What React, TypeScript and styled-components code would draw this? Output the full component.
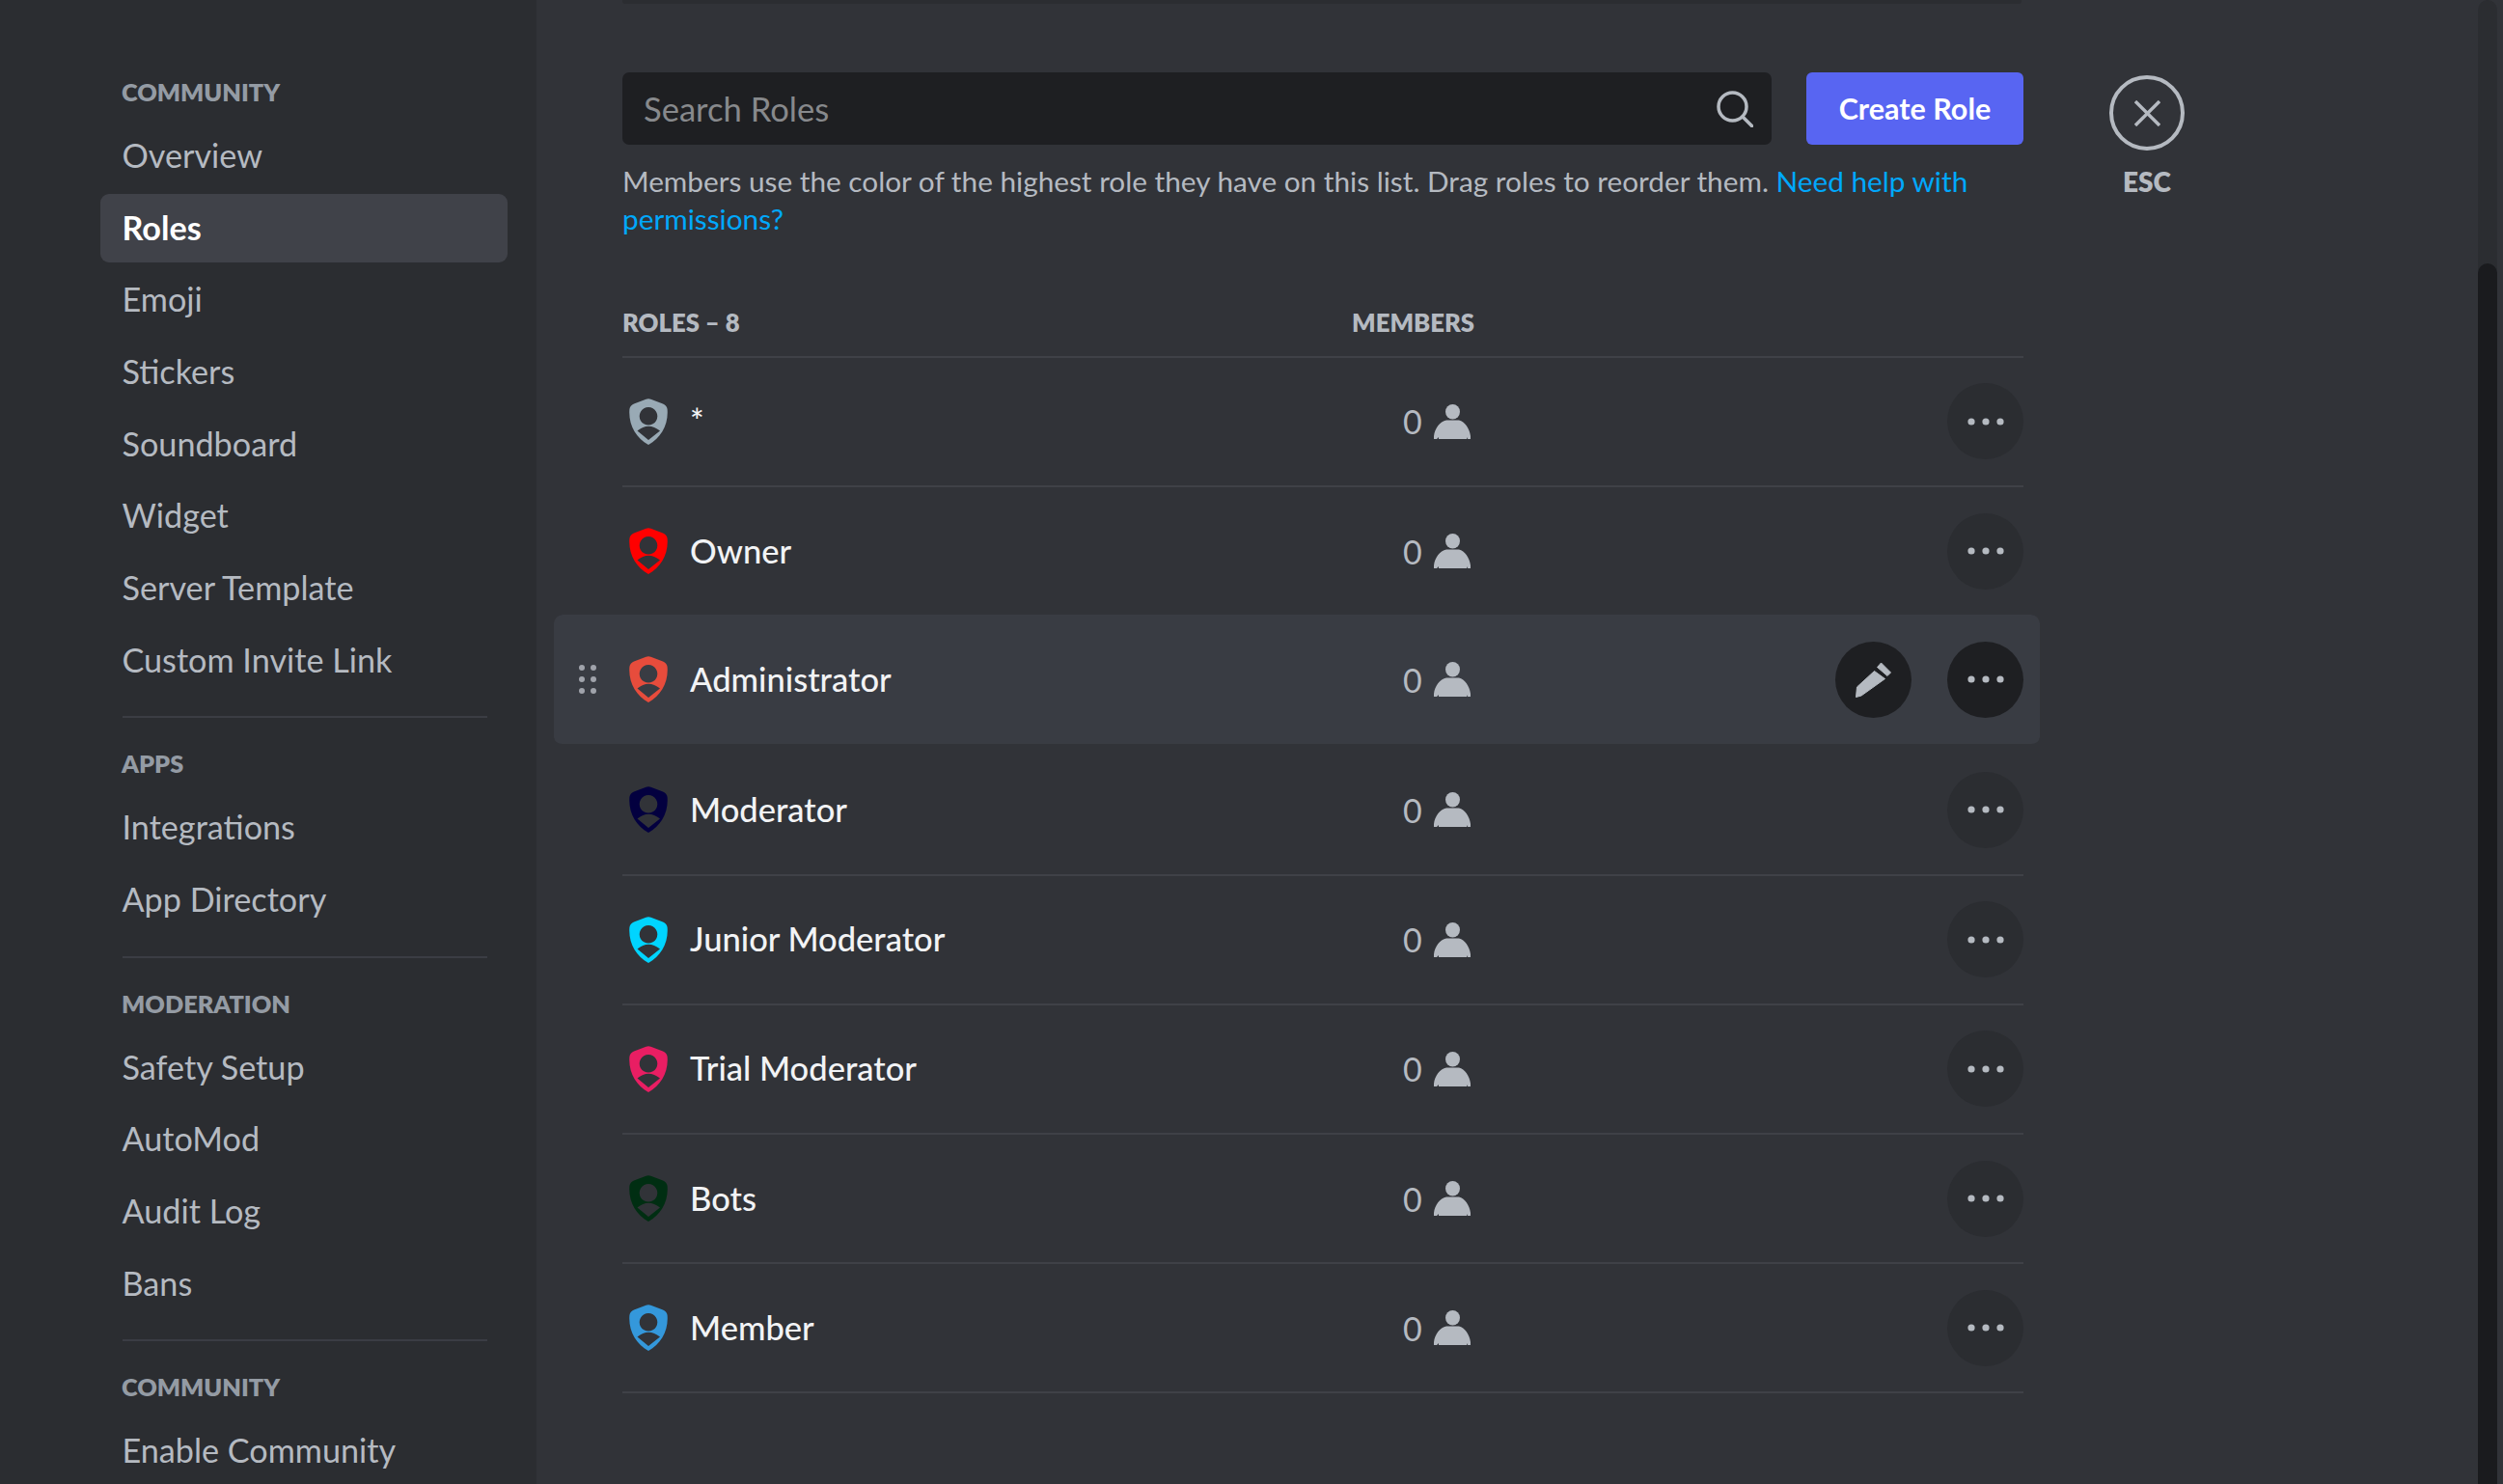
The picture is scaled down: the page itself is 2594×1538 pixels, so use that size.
import React from 'react';
import styled, { createGlobalStyle } from 'styled-components';

const GlobalStyle = createGlobalStyle`
  html, body {
    margin: 0;
    padding: 0;
    height: 100%;
    background: #313338;
    font-family: 'Lato', 'Noto Sans', sans-serif;
  }
`;

const Page = styled.div`
  width: 2594px;
  height: 1538px;
  display: flex;
  overflow: hidden;
  background: #313338;
`;

const Sidebar = styled.nav`
  width: 556px;
  flex: none;
  box-sizing: border-box;
  padding: 78px 30px 0 104px;
  background: #2b2d31;
`;

const SectionTitle = styled.div`
  height: 34px;
  line-height: 34px;
  padding-left: 22px;
  margin-bottom: 14px;
  font-size: 25.3px;
  font-weight: 800;
  color: #949ba4;
`;

const NavItem = styled.div<{ $active?: boolean }>`
  height: 71px;
  line-height: 69.5px;
  padding-left: 22.5px;
  margin-bottom: 3.7px;
  border-radius: 9px;
  font-size: 34.2px;
  font-weight: ${(p) => (p.$active ? 700 : 400)};
  color: ${(p) => (p.$active ? '#ffffff' : '#b5bac1')};
  background: ${(p) => (p.$active ? '#404249' : 'transparent')};
`;

const NavDivider = styled.div`
  height: 2px;
  margin: 22.5px 21px 30px 23px;
  background: #3b3d44;
`;

const Content = styled.main`
  width: 1452px;
  flex: none;
  margin-left: 89px;
`;

const TopEdge = styled.div`
  height: 4px;
  margin-right: 2px;
  border-radius: 0 0 3px 3px;
  background: #2b2d31;
`;

const Toolbar = styled.div`
  display: flex;
  gap: 36px;
  margin-top: 71px;
`;

const SearchBox = styled.div`
  flex: 1;
  height: 75px;
  box-sizing: border-box;
  display: flex;
  align-items: center;
  justify-content: space-between;
  padding: 0 19px 0 22px;
  border-radius: 7px;
  background: #1e1f22;
`;

const SearchPlaceholder = styled.span`
  font-size: 34.6px;
  color: #87898c;
`;

const CreateButton = styled.button`
  width: 225px;
  height: 75px;
  padding: 0 0 2px;
  border: none;
  border-radius: 6px;
  background: #5865f2;
  color: #ffffff;
  font-family: inherit;
  font-size: 30.5px;
  font-weight: 700;
`;

const Description = styled.p`
  margin: 17.5px 0 0;
  font-size: 29.76px;
  line-height: 39.4px;
  color: #b5bac1;
`;

const HelpLink = styled.a`
  color: #00a8fc;
`;

const TableHeader = styled.div`
  display: flex;
  align-items: center;
  height: 50px;
  margin-top: 62.5px;
  padding-bottom: 10px;
  border-bottom: 2px solid #3f4147;
  box-sizing: content-box;
  font-size: 25.7px;
  font-weight: 800;
  color: #b5bac1;
`;

const HeaderName = styled.div`
  width: 756px;
`;

const RoleRow = styled.div<{ $hovered?: boolean; $noLine?: boolean }>`
  position: relative;
  display: flex;
  align-items: center;
  height: ${(p) => (p.$hovered ? '136.2px' : '134.2px')};
  box-sizing: border-box;
  margin: ${(p) => (p.$hovered ? '-2px -17px 0 -71px' : '0')};
  padding: ${(p) => (p.$hovered ? '0 17px 0 71px' : '0')};
  border-bottom: 2px solid ${(p) => (p.$noLine ? 'transparent' : '#3f4147')};
  border-radius: ${(p) => (p.$hovered ? '9px' : '0')};
  background: ${(p) => (p.$hovered ? '#393c43' : 'transparent')};
  background-clip: padding-box;
`;

const RoleName = styled.div`
  width: 756px;
  flex: none;
  display: flex;
  align-items: center;
  gap: 23px;
  padding-left: 7px;
  box-sizing: border-box;
`;

const RoleLabel = styled.span`
  padding-bottom: 2px;
  font-size: 34.5px;
  font-weight: 500;
  color: #f2f3f5;
`;

const MemberCount = styled.div`
  display: flex;
  align-items: center;
  gap: 12px;
  padding-left: 53px;
  font-size: 34px;
  color: #b5bac1;
`;

const Actions = styled.div`
  display: flex;
  gap: 37px;
  margin-left: auto;
`;

const RoundButton = styled.div<{ $dark?: boolean }>`
  width: 79px;
  height: 79px;
  display: flex;
  align-items: center;
  justify-content: center;
  border-radius: 50%;
  background: ${(p) => (p.$dark ? '#1e1f22' : '#2b2d31')};
`;

const DragHandle = styled.svg`
  position: absolute;
  left: 26px;
  top: 52px;
`;

const CloseColumn = styled.div`
  margin-left: 89px;
  padding-top: 78px;
  display: flex;
  flex-direction: column;
  align-items: center;
  width: 78px;
`;

const CloseCircle = styled.div`
  width: 78px;
  height: 78px;
  box-sizing: border-box;
  display: flex;
  align-items: center;
  justify-content: center;
  border: 4px solid #b5bac1;
  border-radius: 50%;
`;

const EscLabel = styled.div`
  margin-top: 15px;
  font-size: 28px;
  font-weight: 800;
  color: #b5bac1;
`;

const ScrollTrack = styled.div`
  width: 20px;
  margin: 0 6px 0 auto;
  background: #2b2d31;
  border-radius: 10px;
`;

const ScrollThumb = styled.div`
  height: 1400px;
  margin-top: 273px;
  background: #1a1b1e;
  border-radius: 10px;
`;

const navSections = [
  { title: 'COMMUNITY', items: ['Overview', 'Roles', 'Emoji', 'Stickers', 'Soundboard', 'Widget', 'Server Template', 'Custom Invite Link'] },
  { title: 'APPS', items: ['Integrations', 'App Directory'] },
  { title: 'MODERATION', items: ['Safety Setup', 'AutoMod', 'Audit Log', 'Bans'] },
  { title: 'COMMUNITY', items: ['Enable Community'] },
];

const roles = [
  { name: '*', color: '#99aab5' },
  { name: 'Owner', color: '#ff0000' },
  { name: 'Administrator', color: '#e74c3c' },
  { name: 'Moderator', color: '#03003f' },
  { name: 'Junior Moderator', color: '#00d4ff' },
  { name: 'Trial Moderator', color: '#e91e63' },
  { name: 'Bots', color: '#002e12' },
  { name: 'Member', color: '#3498db' },
];

const HOVERED = 2;

const ShieldIcon: React.FC<{ color: string }> = ({ color }) => (
  <svg width="40" height="48" viewBox="0 0 40 48">
    <path
      fillRule="evenodd"
      fill={color}
      d="M17.5 .8 Q20 -.2 22.5 .8 L35 5.5 Q39 7 39.6 11 C41 27 33 41 20 48 C7 41 -1 27 .4 11 Q1 7 5 5.5 Z
         M20 9 a9.3 9.3 0 1 0 .01 0 Z
         M8.5 33.5 Q20 24 32 33.5 L20 43 Z"
    />
  </svg>
);

const PersonIcon = () => (
  <svg width="38" height="36" viewBox="0 0 38 36">
    <ellipse cx="19.5" cy="7.8" rx="7.5" ry="7.8" fill="#b5bac1" />
    <path fill="#b5bac1" d="M0 33 C1 25 6 18 13 16.5 L26 16.5 C32 18 37 25 38 33 L38 36 L35 36 L34 34 L5 34 L3 36 L0 36 Z" />
    <rect x="5" y="33" width="29" height="3" fill="#b5bac1" />
  </svg>
);

const PencilIcon = () => (
  <svg width="38" height="37" viewBox="0 0 38 37">
    <path fill="#b5bac1" stroke="#b5bac1" strokeWidth="1" strokeLinejoin="round" d="M26.5 1 L36.5 11 L33 14.5 L22.5 5.5 Z" />
    <path fill="#b5bac1" stroke="#b5bac1" strokeWidth="1" strokeLinejoin="round" d="M19.5 9.5 L30.5 17.5 L6 35 L.5 36.5 L1.5 26 Z" />
  </svg>
);

const DotsIcon = () => (
  <svg width="38" height="8" viewBox="0 0 38 8">
    <circle cx="4" cy="4" r="3.6" fill="#b5bac1" />
    <circle cx="19" cy="4" r="3.6" fill="#b5bac1" />
    <circle cx="34" cy="4" r="3.6" fill="#b5bac1" />
  </svg>
);

const SearchIcon = () => (
  <svg width="38" height="38" viewBox="0 0 38 38" fill="none" stroke="#b5bac1" strokeWidth="3.5" strokeLinecap="round">
    <circle cx="16.5" cy="16.5" r="14.5" />
    <line x1="27" y1="27" x2="36.5" y2="36.5" />
  </svg>
);

const CloseIcon = () => (
  <svg width="27" height="27" viewBox="0 0 27 27" stroke="#b5bac1" strokeWidth="3.4">
    <line x1="1" y1="1" x2="26" y2="26" />
    <line x1="26" y1="1" x2="1" y2="26" />
  </svg>
);

const App: React.FC = () => (
  <Page>
    <GlobalStyle />
    <Sidebar>
      {navSections.map((section, i) => (
        <React.Fragment key={`${section.title}-${i}`}>
          {i > 0 && <NavDivider />}
          <SectionTitle>{section.title}</SectionTitle>
          {section.items.map((item) => (
            <NavItem key={item} $active={item === 'Roles'}>{item}</NavItem>
          ))}
        </React.Fragment>
      ))}
    </Sidebar>
    <Content>
      <TopEdge />
      <Toolbar>
        <SearchBox>
          <SearchPlaceholder>Search Roles</SearchPlaceholder>
          <SearchIcon />
        </SearchBox>
        <CreateButton>Create Role</CreateButton>
      </Toolbar>
      <Description>
        Members use the color of the highest role they have on this list. Drag roles to reorder them.{' '}
        <HelpLink>Need help with permissions?</HelpLink>
      </Description>
      <TableHeader>
        <HeaderName>ROLES – 8</HeaderName>
        <div>MEMBERS</div>
      </TableHeader>
      {roles.map((role, i) => (
        <RoleRow key={role.name} $hovered={i === HOVERED} $noLine={i === HOVERED || i === HOVERED - 1}>
          {i === HOVERED && (
            <DragHandle width="18" height="30" viewBox="0 0 18 30">
              {[3, 15, 27].map((y) => (
                <React.Fragment key={y}>
                  <circle cx="3" cy={y} r="3" fill="#a0a3ab" />
                  <circle cx="15" cy={y} r="3" fill="#a0a3ab" />
                </React.Fragment>
              ))}
            </DragHandle>
          )}
          <RoleName>
            <ShieldIcon color={role.color} />
            <RoleLabel>{role.name}</RoleLabel>
          </RoleName>
          <MemberCount>
            0
            <PersonIcon />
          </MemberCount>
          <Actions>
            {i === HOVERED && <RoundButton $dark><PencilIcon /></RoundButton>}
            <RoundButton $dark={i === HOVERED}><DotsIcon /></RoundButton>
          </Actions>
        </RoleRow>
      ))}
    </Content>
    <CloseColumn>
      <CloseCircle><CloseIcon /></CloseCircle>
      <EscLabel>ESC</EscLabel>
    </CloseColumn>
    <ScrollTrack>
      <ScrollThumb />
    </ScrollTrack>
  </Page>
);

export default App;
